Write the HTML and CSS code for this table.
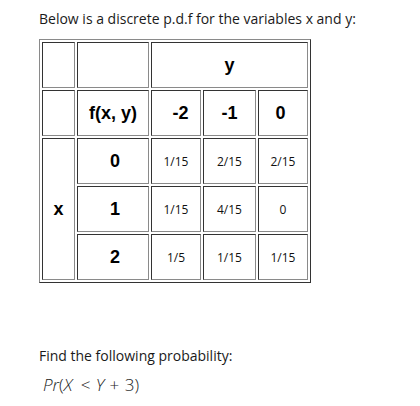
FILE: index.html
```html
<!DOCTYPE html>
<html>
<head>
<meta charset="utf-8">
<link rel="stylesheet" href="styles.css">
</head>
<body>
<div class="page">
  <p class="intro">Below is a discrete p.d.f for the variables x and y:</p>
  <table class="pdf">
    <colgroup>
      <col class="c1"><col class="c2"><col class="c3"><col class="c4"><col class="c5">
    </colgroup>
    <tr>
      <td></td>
      <td></td>
      <td class="head" colspan="3">y</td>
    </tr>
    <tr>
      <td></td>
      <td class="head">f(x, y)</td>
      <td class="head shift-r">-2</td>
      <td class="head">-1</td>
      <td class="head shift-l">0</td>
    </tr>
    <tr>
      <td class="head" rowspan="3">x</td>
      <td class="head shift-r2">0</td>
      <td class="val">1/15</td>
      <td class="val">2/15</td>
      <td class="val">2/15</td>
    </tr>
    <tr>
      <td class="head shift-r2">1</td>
      <td class="val">1/15</td>
      <td class="val">4/15</td>
      <td class="val">0</td>
    </tr>
    <tr>
      <td class="head shift-r2">2</td>
      <td class="val">1/5</td>
      <td class="val">1/15</td>
      <td class="val">1/15</td>
    </tr>
  </table>
  <p class="question">Find the following probability:</p>
  <p class="math"><span class="it">Pr</span>(<span class="it">X</span> <span class="op lt">&lt;</span> <span class="it">Y</span> <span class="op">+</span> 3)</p>
</div>
</body>
</html>
```
FILE: styles.css
```css
html, body {
  margin: 0;
  padding: 0;
  background: #ffffff;
}
.page {
  padding: 9px 0 0 39px;
  font-family: "Open Sans", "Liberation Sans", sans-serif;
  color: #1a1a1a;
}
.intro {
  margin: 0;
  font-size: 14px;
  line-height: 20px;
}
.pdf {
  margin-top: 10px;
  table-layout: fixed;
  width: 272px;
  border-collapse: separate;
  border-spacing: 2px;
  border: 1px solid;
  border-color: #8a8a8a #333333 #333333 #8a8a8a;
}
.c1 { width: 33px; }
.c2 { width: 72px; }
.c3 { width: 50px; }
.c4 { width: 53px; }
.c5 { width: 50px; }
.pdf td {
  box-sizing: border-box;
  height: 46px;
  padding: 0;
  border: 1px solid;
  border-color: #333333 #8a8a8a #8a8a8a #333333;
  text-align: center;
  vertical-align: middle;
  color: #000;
}
.pdf td.head {
  font-family: "Liberation Sans", Arial, sans-serif;
  font-weight: bold;
  font-size: 18px;
}
.pdf td.val {
  font-family: "Open Sans", "Liberation Sans", sans-serif;
  font-size: 12px;
  color: #111;
}
.pdf td.shift-r { padding-left: 9px; }
.pdf td.shift-l { padding-right: 5px; }
.pdf td.shift-r2 { padding-left: 4px; }
.question {
  margin: 63px 0 0 0;
  font-size: 14px;
  line-height: 20px;
}
.math {
  margin: 8px 0 0 4px;
  font-family: "Open Sans", "Liberation Sans", sans-serif;
  font-weight: 300;
  font-size: 17px;
  line-height: 22px;
  color: #222;
  word-spacing: 1px;
}
.math .it { font-style: italic; }
.math .lt { margin-left: 3px; }
```
